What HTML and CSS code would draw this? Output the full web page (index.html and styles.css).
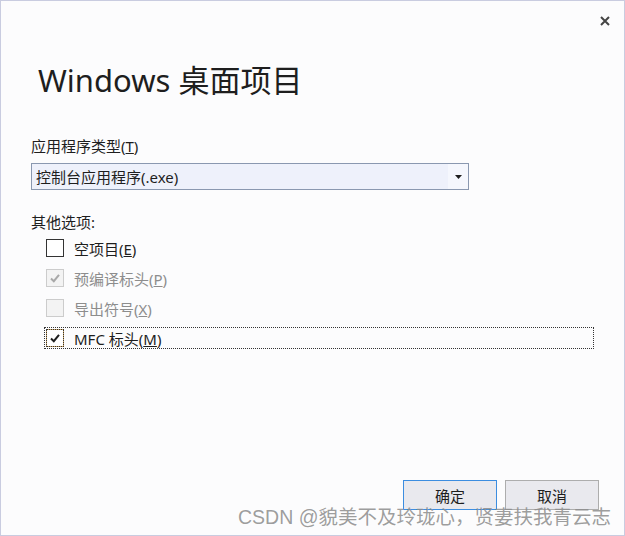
FILE: index.html
```html
<!DOCTYPE html>
<html lang="zh-CN">
<head>
    <meta charset="UTF-8">
    <meta name="viewport" content="width=device-width, initial-scale=1.0">
    <title>Windows 桌面项目</title>
    <link rel="stylesheet" href="styles.css">
</head>
<body>
    <div class="dialog">
        <div class="titlebar">
            <button class="close" type="button" aria-label="关闭">
                <svg viewBox="0 0 10 10" class="close-icon">
                    <path d="M1 1L9 9M9 1L1 9"></path>
                </svg>
            </button>
        </div>

        <h1 class="title">Windows 桌面项目</h1>

        <div class="field">
            <div class="label">应用程序类型(<u>T</u>)</div>
            <div class="select">
                <span class="select-value">控制台应用程序(.exe)</span>
                <span class="select-arrow">
                    <svg viewBox="0 0 7 4" class="arrow-icon">
                        <path d="M0 0H7L3.5 4z"></path>
                    </svg>
                </span>
            </div>
        </div>

        <div class="options">
            <div class="label">其他选项:</div>
            <div class="check">
                <span class="box"></span>
                <span>空项目(<u>E</u>)</span>
            </div>
            <div class="check disabled">
                <span class="box">
                    <svg viewBox="0 0 12 12" class="tick"><path d="M2 6.5L4.8 9.2L10 2.8"></path></svg>
                </span>
                <span>预编译标头(<u>P</u>)</span>
            </div>
            <div class="check disabled">
                <span class="box"></span>
                <span>导出符号(<u>X</u>)</span>
            </div>
            <div class="check focused">
                <span class="box">
                    <svg viewBox="0 0 12 12" class="tick"><path d="M2 6.5L4.8 9.2L10 2.8"></path></svg>
                </span>
                <span>MFC 标头(<u>M</u>)</span>
            </div>
        </div>

        <div class="buttons">
            <button class="btn default" type="button">确定</button>
            <button class="btn" type="button">取消</button>
        </div>

        <div class="watermark">CSDN @貌美不及玲珑心，贤妻扶我青云志</div>
    </div>
</body>
</html>
```

FILE: styles.css
```css
body {
    margin: 0;
    font-family: "Noto Sans", "Noto Sans CJK SC", sans-serif;
    color: #1e1e1e;
    background: #fcfcfd;
}
.dialog {
    position: relative;
    box-sizing: border-box;
    width: 625px;
    height: 536px;
    border: 1px solid #c9cce0;
    background: #fcfcfd;
    padding: 0 25px 25px 30px;
    display: flex;
    flex-direction: column;
}
.titlebar {
    height: 40px;
    display: flex;
    justify-content: flex-end;
    align-items: center;
}
.close {
    width: 20px;
    height: 20px;
    margin-right: -16px;
    padding: 0;
    border: none;
    background: none;
    display: flex;
    align-items: center;
    justify-content: center;
}
.close-icon {
    width: 10px;
    height: 10px;
    stroke: #444;
    stroke-width: 2;
}
.title {
    margin: 19px 0 0 7px;
    font-size: 31px;
    font-weight: 400;
    line-height: 40px;
    color: #1e1e1e;
}
.label {
    font-size: 15px;
    line-height: 20px;
}
.field {
    margin-top: 36px;
}
.select {
    margin-top: 7px;
    width: 438px;
    height: 27px;
    box-sizing: border-box;
    border: 1px solid #8a98b0;
    background: #eef1fb;
    display: flex;
    align-items: center;
    font-size: 15px;
}
.select-value {
    flex: 1;
    padding-left: 4px;
}
.select-arrow {
    width: 20px;
    height: 100%;
    background: #f5f7fd;
    display: flex;
    align-items: center;
    justify-content: center;
}
.arrow-icon {
    width: 7px;
    height: 4px;
    fill: #1e1e1e;
}
.options {
    margin-top: 22px;
}
.options .label {
    margin-bottom: 6px;
}
.check {
    box-sizing: border-box;
    width: 548px;
    height: 20px;
    margin: 0 0 10px 14px;
    padding-left: 1px;
    display: flex;
    align-items: center;
    gap: 10px;
    font-size: 15px;
}
.box {
    box-sizing: border-box;
    width: 18px;
    height: 18px;
    border: 1px solid #333;
    background: #fff;
    display: flex;
    align-items: center;
    justify-content: center;
}
.tick {
    width: 12px;
    height: 12px;
    fill: none;
    stroke: #1e1e1e;
    stroke-width: 2;
}
.check.disabled {
    color: #8d8d8d;
}
.check.disabled .box {
    border-color: #cccccc;
    background: #f3f3f3;
}
.check.disabled .tick {
    stroke: #a8a8a8;
}
.check.focused {
    outline: 1px dotted #333;
}
.check.focused .box {
    border-color: #d0a865;
    outline: 1px dotted #333;
    outline-offset: -1px;
}
.buttons {
    margin-top: auto;
    display: flex;
    justify-content: flex-end;
    gap: 8px;
}
.btn {
    width: 94px;
    height: 30px;
    box-sizing: border-box;
    border: 1px solid #adadad;
    background: #e9e9ee;
    font-family: "Noto Sans", "Noto Sans CJK SC", sans-serif;
    font-size: 15px;
    color: #1e1e1e;
    padding: 0;
}
.btn.default {
    border-color: #3c8de0;
}
.watermark {
    position: absolute;
    left: 237px;
    top: 504px;
    font-family: "Liberation Sans", "Noto Sans CJK SC", sans-serif;
    font-size: 19.5px;
    line-height: 24px;
    color: rgba(140, 140, 140, 0.85);
    white-space: nowrap;
}
```
